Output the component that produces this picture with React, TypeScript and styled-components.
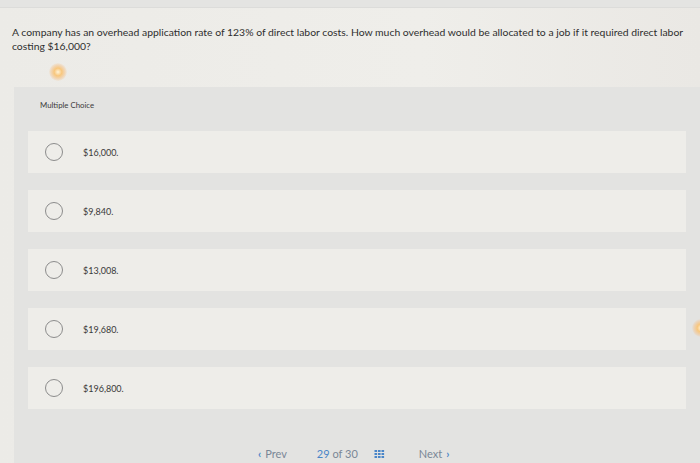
import React from 'react';
import styled, { createGlobalStyle } from 'styled-components';

const choices = ['$16,000.', '$9,840.', '$13,008.', '$19,680.', '$196,800.'];

const GlobalStyle = createGlobalStyle`
  html, body {
    margin: 0;
    padding: 0;
    background: #ecebe7;
    overflow: hidden;
  }
  body {
    font-family: Lato, "Open Sans", sans-serif;
    color: #333;
  }
`;

export default function App() {
    return (
        <>
            <GlobalStyle />
            <Page>
                <TopStrip />
                <Question>
                    A company has an overhead application rate of 123% of direct labor costs. How much overhead would be allocated to a job if it required direct labor
                    costing $16,000?
                </Question>
                <Glare style={{ left: 49, top: 63 }} />
                <Glare style={{ left: 692, top: 319 }} />
                <Panel>
                    <PanelLabel>Multiple Choice</PanelLabel>
                    <ChoiceList>
                        {choices.map((choice) => (
                            <ChoiceRow key={choice}>
                                <Radio />
                                <ChoiceText>{choice}</ChoiceText>
                            </ChoiceRow>
                        ))}
                    </ChoiceList>
                    <Footer>
                        <NavLink>
                            <Chevron>‹</Chevron> Prev
                        </NavLink>
                        <Pager>
                            <b>29</b> of 30
                        </Pager>
                        <GridIcon viewBox="0 0 10 8">
                            {[0, 1, 2].map((r) =>
                                [0, 1, 2].map((c) => (
                                    <rect key={`${r}-${c}`} x={c * 3.5} y={r * 3} width="2.6" height="2" fill="#4a86c8" />
                                ))
                            )}
                        </GridIcon>
                        <NavLink>
                            Next <Chevron>›</Chevron>
                        </NavLink>
                    </Footer>
                </Panel>
            </Page>
        </>
    );
}

const Page = styled.div`
  position: relative;
  width: 700px;
  height: 463px;
  overflow: hidden;
  background: linear-gradient(90deg, #ecebe7 0%, #efeeea 60%, #eae8e4 100%);
`;

const TopStrip = styled.div`
  height: 7px;
  background: #e4e4e2;
  border-bottom: 1px solid #dcdcda;
`;

const Question = styled.p`
  margin: 17px 0 0 12px;
  width: 682px;
  font-size: 10.4px;
  line-height: 14px;
  color: #2e2e2e;
`;

const Glare = styled.div`
  position: absolute;
  width: 18px;
  height: 18px;
  border-radius: 50%;
  background: radial-gradient(circle, #fff3d8 0%, #f8c77e 30%, rgba(245, 190, 130, 0.45) 55%, rgba(240, 200, 160, 0) 75%);
`;

const Panel = styled.section`
  margin: 34px 0 0 14px;
  padding: 13px 14px 0 14px;
  height: 400px;
  background: #e3e3e1;
`;

const PanelLabel = styled.div`
  padding-left: 12px;
  font-size: 7.8px;
  color: #3a3a3a;
  height: 12px;
`;

const ChoiceList = styled.div`
  display: flex;
  flex-direction: column;
  gap: 17px;
  margin-top: 19px;
  width: 658px;
`;

const ChoiceRow = styled.div`
  display: flex;
  align-items: center;
  height: 42px;
  padding-left: 17px;
  background: #eeede9;
`;

const Radio = styled.span`
  width: 18px;
  height: 18px;
  border-radius: 50%;
  border: 1px solid #8c8c8c;
  box-sizing: border-box;
  margin-right: 20px;
`;

const ChoiceText = styled.span`
  font-size: 9px;
  color: #3a3a3a;
`;

const Footer = styled.div`
  display: flex;
  align-items: center;
  height: 13px;
  margin-top: 38px;
  padding-left: 230px;
  font-size: 11px;
  line-height: 13px;
  color: #5a6b80;
`;

const NavLink = styled.span`
  display: inline-flex;
  align-items: center;
  gap: 4px;
  color: #7a8796;
`;

const Chevron = styled.span`
  color: #4a86c8;
  font-weight: bold;
`;

const Pager = styled.span`
  margin-left: 30px;
  color: #7a8796;
  b {
    color: #4a86c8;
    font-weight: normal;
  }
`;

const GridIcon = styled.svg`
  width: 11px;
  height: 8px;
  margin: 0 34px 0 16px;
`;
